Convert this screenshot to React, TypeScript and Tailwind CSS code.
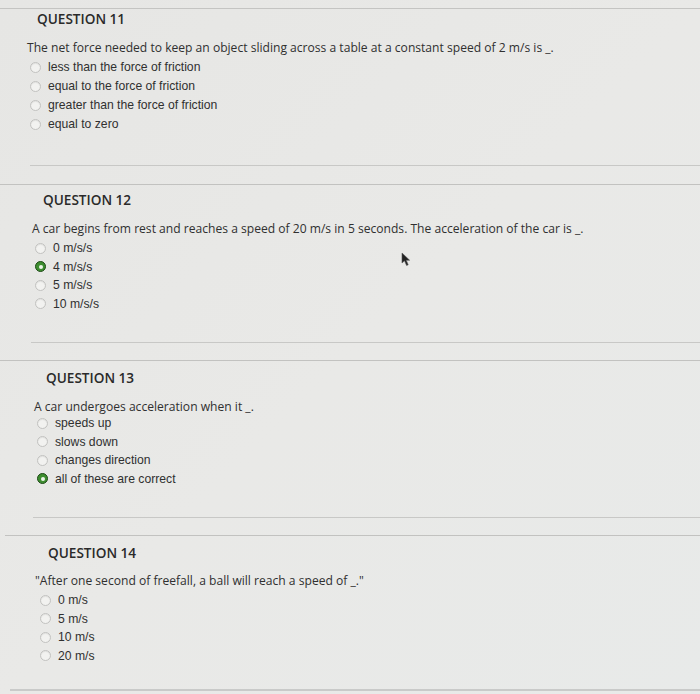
import React from "react";

type Question = {
  number: number;
  text: string;
  options: string[];
  selected?: number;
};

const questions: Question[] = [
  {
    number: 11,
    text: "The net force needed to keep an object sliding across a table at a constant speed of 2 m/s is _.",
    options: [
      "less than the force of friction",
      "equal to the force of friction",
      "greater than the force of friction",
      "equal to zero",
    ],
  },
  {
    number: 12,
    text: "A car begins from rest and reaches a speed of 20 m/s in 5 seconds. The acceleration of the car is _.",
    options: ["0 m/s/s", "4 m/s/s", "5 m/s/s", "10 m/s/s"],
    selected: 1,
  },
  {
    number: 13,
    text: "A car undergoes acceleration when it _.",
    options: ["speeds up", "slows down", "changes direction", "all of these are correct"],
    selected: 3,
  },
  {
    number: 14,
    text: "\"After one second of freefall, a ball will reach a speed of _.\"",
    options: ["0 m/s", "5 m/s", "10 m/s", "20 m/s"],
  },
];

// the photo drifts to the right a little more on every question
const layout = [
  { head: "pt-0 pl-[37px]", text: "mt-[9px] pl-[27px]", opts: "pl-[30px] leading-[19px]", inner: "mt-[31px] ml-[30px]", outer: "mt-[18px] ml-0" },
  { head: "pt-[5px] pl-[43px]", text: "mt-[9px] pl-[32px]", opts: "pl-[35px] leading-[18.5px]", inner: "mt-[29px] ml-[31px]", outer: "mt-[17px] ml-0" },
  { head: "pt-[7px] pl-[46px]", text: "mt-[9px] pl-[34px]", opts: "-mt-[3px] pl-[37px] leading-[18.5px]", inner: "mt-[29px] ml-[33px]", outer: "mt-[17px] ml-[5px]" },
  { head: "pt-[7px] pl-[48px]", text: "mt-[8px] pl-[35px]", opts: "pl-[40px] leading-[18.5px]", inner: "", outer: "" },
];

function Radio({ checked }: { checked: boolean }) {
  if (checked) {
    return (
      <span className="flex h-[11px] w-[11px] shrink-0 items-center justify-center rounded-full border border-[#1d4a16] bg-[#3d8d2f]">
        <span className="h-[4px] w-[4px] rounded-full bg-[#eef5ea]" />
      </span>
    );
  }
  return (
    <span className="h-[11px] w-[11px] shrink-0 rounded-full border border-[#c2c2c0] bg-[#f2f2f0] shadow-[inset_0_1px_1px_rgba(0,0,0,0.07)]" />
  );
}

function QuestionBlock({ q, idx }: { q: Question; idx: number }) {
  const l = layout[idx];
  return (
    <div>
      <div className={`${l.head} font-['Open_Sans',sans-serif] text-[13.6px] leading-[20px] font-semibold text-[#2a2a2a]`}>
        QUESTION {q.number}
      </div>
      <div className={`${l.text} font-['Open_Sans',sans-serif] text-[12.1px] leading-[20px] text-[#303030]`}>
        {q.text}
      </div>
      <div className={`${l.opts} font-['Liberation_Sans',Arial,sans-serif] text-[12.2px] text-[#303030]`}>
        {q.options.map((o, i) => (
          <div key={i} className="flex items-center gap-[7px]">
            <Radio checked={q.selected === i} />
            <span>{o}</span>
          </div>
        ))}
      </div>
      {l.inner && <div className={`${l.inner} h-px bg-[#c8c8c6]`} />}
      {l.outer && <div className={`${l.outer} h-px bg-[#c2c2c0]`} />}
    </div>
  );
}

export default function App() {
  return (
    <div className="relative h-[694px] w-[700px] overflow-hidden bg-gradient-to-br from-[#e6e6e4] via-[#e9e9e7] to-[#e8eae9]">
      <div className="mt-[8px] h-px bg-[#c4c4c2]" />
      {questions.map((q, i) => (
        <QuestionBlock key={q.number} q={q} idx={i} />
      ))}
      <div className="mt-[24px] ml-[10px] h-[2px] bg-[#c9cac9]" />

      {/* mouse pointer caught in the photo */}
      <svg className="absolute left-[401px] top-[252px]" width="11" height="15" viewBox="0 0 11 15">
        <path d="M1 1 L1 11 L3.5 8.8 L5.6 13.5 L7.2 12.8 L5.2 8.2 L8.6 8.2 Z" fill="#222" stroke="#555" strokeWidth="0.6" />
      </svg>
    </div>
  );
}
